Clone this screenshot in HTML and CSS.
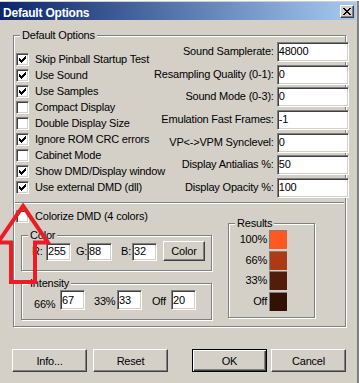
FILE: index.html
```html
<!DOCTYPE html>
<html>
<head>
<meta charset="utf-8">
<title>Default Options</title>
<link rel="stylesheet" href="styles.css">
</head>
<body>
<div class="window">
  <div class="titlebar">
    <span class="title">Default Options</span>
    <span class="close"><svg width="8" height="7" viewBox="0 0 8 7"><path d="M0 0h2v1H0zM6 0h2v1H6zM1 1h2v1H1zM5 1h2v1H5zM2 2h4v1H2zM3 3h2v1H3zM2 4h4v1H2zM1 5h2v1H1zM5 5h2v1H5zM0 6h2v1H0zM6 6h2v1H6z" fill="#000"/></svg></span>
  </div>
  <div class="body">
    <div class="group main">
      <div class="caption">Default Options</div>
      <div class="top">
        <div class="checks">
          <div class="check"><span class="box"><svg class="tick" width="7" height="7" viewBox="0 0 7 7"><path d="M0 2h1v3H0zM1 3h1v3H1zM2 4h1v3H2zM3 3h1v3H3zM4 2h1v3H4zM5 1h1v3H5zM6 0h1v3H6z"/></svg></span><span class="lbl">Skip Pinball Startup Test</span></div>
          <div class="check"><span class="box"><svg class="tick" width="7" height="7" viewBox="0 0 7 7"><path d="M0 2h1v3H0zM1 3h1v3H1zM2 4h1v3H2zM3 3h1v3H3zM4 2h1v3H4zM5 1h1v3H5zM6 0h1v3H6z"/></svg></span><span class="lbl">Use Sound</span></div>
          <div class="check"><span class="box"><svg class="tick" width="7" height="7" viewBox="0 0 7 7"><path d="M0 2h1v3H0zM1 3h1v3H1zM2 4h1v3H2zM3 3h1v3H3zM4 2h1v3H4zM5 1h1v3H5zM6 0h1v3H6z"/></svg></span><span class="lbl">Use Samples</span></div>
          <div class="check"><span class="box"></span><span class="lbl">Compact Display</span></div>
          <div class="check"><span class="box"></span><span class="lbl">Double Display Size</span></div>
          <div class="check"><span class="box"><svg class="tick" width="7" height="7" viewBox="0 0 7 7"><path d="M0 2h1v3H0zM1 3h1v3H1zM2 4h1v3H2zM3 3h1v3H3zM4 2h1v3H4zM5 1h1v3H5zM6 0h1v3H6z"/></svg></span><span class="lbl">Ignore ROM CRC errors</span></div>
          <div class="check"><span class="box"></span><span class="lbl">Cabinet Mode</span></div>
          <div class="check"><span class="box"><svg class="tick" width="7" height="7" viewBox="0 0 7 7"><path d="M0 2h1v3H0zM1 3h1v3H1zM2 4h1v3H2zM3 3h1v3H3zM4 2h1v3H4zM5 1h1v3H5zM6 0h1v3H6z"/></svg></span><span class="lbl">Show DMD/Display window</span></div>
          <div class="check"><span class="box"><svg class="tick" width="7" height="7" viewBox="0 0 7 7"><path d="M0 2h1v3H0zM1 3h1v3H1zM2 4h1v3H2zM3 3h1v3H3zM4 2h1v3H4zM5 1h1v3H5zM6 0h1v3H6z"/></svg></span><span class="lbl">Use external DMD (dll)</span></div>
        </div>
        <div class="fields">
          <span class="flabel">Sound Samplerate:</span><span class="input">48000</span>
          <span class="flabel">Resampling Quality (0-1):</span><span class="input">0</span>
          <span class="flabel">Sound Mode (0-3):</span><span class="input">0</span>
          <span class="flabel">Emulation Fast Frames:</span><span class="input">-1</span>
          <span class="flabel">VP&lt;-&gt;VPM Synclevel:</span><span class="input">0</span>
          <span class="flabel">Display Antialias %:</span><span class="input">50</span>
          <span class="flabel">Display Opacity %:</span><span class="input">100</span>
        </div>
      </div>
      <div class="sep"></div>
      <div class="bottom">
        <div class="left">
          <div class="check colorize"><span class="box"></span><span class="lbl">Colorize DMD (4 colors)</span></div>
          <div class="group color">
            <div class="caption">Color</div>
            <div class="color-row">
              <span class="clabel r">R:</span><span class="input small">255</span>
              <span class="clabel g">G:</span><span class="input small">88</span>
              <span class="clabel b">B:</span><span class="input small">32</span>
              <span class="btn color-btn">Color</span>
            </div>
          </div>
          <div class="group intensity">
            <div class="caption">Intensity</div>
            <div class="int-row">
              <span class="ilabel i66">66%</span><span class="input mid">67</span>
              <span class="ilabel i33">33%</span><span class="input mid">33</span>
              <span class="ilabel ioff">Off</span><span class="input mid">20</span>
            </div>
          </div>
        </div>
        <div class="group results">
          <div class="caption">Results</div>
          <div class="swatches">
            <span class="slabel">100%</span><span class="swatch" style="background:#ff5820"></span>
            <span class="slabel">66%</span><span class="swatch" style="background:#ab3b15"></span>
            <span class="slabel">33%</span><span class="swatch" style="background:#541d0b"></span>
            <span class="slabel">Off</span><span class="swatch" style="background:#331206"></span>
          </div>
        </div>
      </div>
    </div>
    <div class="buttons">
      <span class="btn wide">Info...</span>
      <span class="btn wide reset">Reset</span>
      <span class="btn wide default ok">OK</span>
      <span class="btn wide cancel">Cancel</span>
    </div>
  </div>
  <svg class="arrow" width="359" height="383" viewBox="0 0 359 383">
    <polygon points="23,205 48,241.5 35,241.5 35,281 11,281 11,241.5 -2,241.5" fill="none" stroke="#ed1c24" stroke-width="4" stroke-linejoin="miter"/>
  </svg>
</div>
</body>
</html>
```

FILE: styles.css
```css
* { box-sizing: border-box; }

html, body {
  margin: 0;
  padding: 0;
  background: #d4d0c8;
}

body {
  font-family: "Liberation Sans", Arial, sans-serif;
  font-size: 11px;
  letter-spacing: -0.2px;
  color: #000;
}

.window {
  position: relative;
  width: 359px;
  height: 383px;
  overflow: hidden;
  background: #d4d0c8;
  border-top: 1px solid #ffffff;
  padding-top: 1px;
  box-shadow: inset -2px 0 #808080, inset -1px 0 #404040;
}

/* title bar */
.titlebar {
  height: 18px;
  margin-right: 3px;
  background: linear-gradient(to right, #0a246a, #a6caf0);
  display: flex;
  justify-content: space-between;
  align-items: flex-start;
}

.title {
  color: #fff;
  font-weight: bold;
  font-size: 12px;
  line-height: 16px;
  margin: 3px 0 0 3px;
}

.close {
  width: 14px;
  height: 13px;
  margin: 3px 2px 0 0;
  background: #d4d0c8;
  border: 1px solid;
  border-color: #fff #404040 #404040 #fff;
  box-shadow: inset -1px -1px #808080;
  display: flex;
  align-items: center;
  justify-content: center;
}

.close svg { display: block; }

/* group boxes */
.group {
  border: 1px solid #808080;
  box-shadow: inset 1px 1px #fff, 1px 1px #fff;
}

.caption {
  width: fit-content;
  margin: -7px 0 0 6px;
  padding: 0 2px;
  height: 13px;
  line-height: 13px;
  background: #d4d0c8;
  white-space: nowrap;
}

.main {
  margin: 15px 0 0 13px;
  width: 333px;
  height: 292px;
}

.top {
  display: flex;
}

.checks {
  width: 140px;
  padding: 9px 0 0 2px;
}

.check {
  display: flex;
  align-items: flex-start;
  height: 16px;
  line-height: 16px;
  white-space: nowrap;
}

.box {
  flex: none;
  width: 13px;
  height: 13px;
  margin-top: 2px;
  padding: 2px 0 0 2px;
  background: #fff;
  border: 1px solid;
  border-color: #808080 #fff #fff #808080;
  box-shadow: inset 1px 1px #404040, inset -1px -1px #d4d0c8;
}

.tick {
  display: block;
  fill: #000;
}

.lbl {
  margin-left: 6px;
}

.fields {
  flex: 1;
  display: grid;
  grid-template-columns: 1fr 72px;
  grid-auto-rows: 20px;
  column-gap: 3px;
  row-gap: 2.67px;
  padding-right: 3px;
}

.flabel {
  text-align: right;
  white-space: nowrap;
  line-height: 19px;
}

.input {
  display: block;
  background: #fff;
  border: 1px solid;
  border-color: #808080 #fff #fff #808080;
  box-shadow: inset 1px 1px #404040, inset -1px -1px #d4d0c8;
  padding-left: 1px;
  height: 20px;
  line-height: 17px;
  white-space: nowrap;
}

.sep {
  margin: 4px 1px 0;
  height: 2px;
  border-top: 1px solid #808080;
  border-bottom: 1px solid #fff;
}

.bottom {
  display: flex;
  align-items: flex-start;
  margin-top: 4px;
}

.left {
  width: 198px;
}

.colorize {
  padding-left: 2px;
}

.color {
  margin: 11px 0 0 7px;
  width: 191px;
  height: 36px;
}

.color-row {
  display: flex;
  align-items: flex-end;
  margin-top: -1px;
}

.clabel {
  line-height: 16px;
  white-space: nowrap;
  margin-bottom: 2px;
}

.clabel.r { margin-left: 10px; width: 14px; }
.clabel.g { margin-left: 5px; width: 11px; }
.clabel.b { margin-left: 9px; width: 11px; }

.input.small {
  width: 25px;
  height: 18px;
  line-height: 15px;
}

.btn {
  display: flex;
  align-items: center;
  justify-content: center;
  background: #d4d0c8;
  border: 1px solid;
  border-color: #fff #404040 #404040 #fff;
  box-shadow: inset -1px -1px #808080;
  white-space: nowrap;
}

.color-btn {
  margin-left: 6px;
  width: 42px;
  height: 20px;
  padding-top: 1px;
}

.intensity {
  margin: 12px 0 0 7px;
  width: 191px;
  height: 37px;
}

.int-row {
  display: flex;
  align-items: flex-start;
}

.ilabel {
  line-height: 16px;
  white-space: nowrap;
}

.i66 { margin: 6px 0 0 12px; width: 26px; }
.i33 { margin: 3px 0 0 9px; width: 23px; }
.ioff { margin: 3px 0 0 10px; width: 19px; }

.input.mid {
  width: 25px;
  height: 20px;
  line-height: 19px;
}

.results {
  margin: 15px 0 0 16px;
  width: 87px;
  height: 95px;
}

.swatches {
  display: grid;
  grid-template-columns: 38px 18px;
  grid-auto-rows: 19px;
  column-gap: 2px;
  row-gap: 1.67px;
}

.slabel {
  text-align: right;
  line-height: 19px;
}

.swatch {
  display: block;
  border-top: 1px solid #808080;
  border-left: 1px solid #808080;
}

/* bottom buttons */
.buttons {
  display: flex;
  margin-top: 22px;
  padding-left: 12px;
}

.btn.wide {
  width: 75px;
  height: 23px;
}

.reset { margin-left: 6px; }
.ok { margin-left: 24px; }
.cancel { margin-left: 4px; }

.btn.default {
  border-color: #000;
  box-shadow: inset 1px 1px #fff, inset -1px -1px #404040, inset -2px -2px #808080;
}

/* annotation arrow */
.arrow {
  position: absolute;
  left: 0;
  top: 0;
  overflow: visible;
  pointer-events: none;
}
```
